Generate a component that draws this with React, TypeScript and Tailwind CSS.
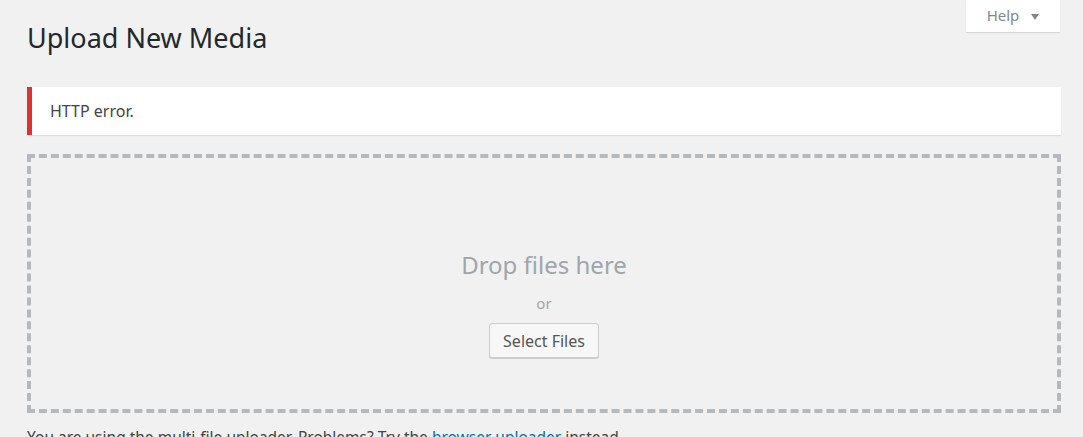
export default function App() {
  return (
    <div
      className="w-[1083px] h-[437px] overflow-hidden bg-[#f1f1f1] text-[#444]"
      style={{ fontFamily: '"Noto Sans", "Open Sans", sans-serif' }}
    >
      <div className="flex justify-end pr-[23px]">
        <button className="flex h-[32px] w-[94px] items-center justify-center gap-[12px] bg-white text-[15px] text-[#82878c] shadow-[0_1px_1px_rgba(0,0,0,0.1)]">
          <span className="-mt-[1px]">Help</span>
          <svg width="8" height="6" viewBox="0 0 8 6" className="mt-[1px]">
            <path d="M0 0h8L4 6z" fill="#82878c" />
          </svg>
        </button>
      </div>

      <div className="pl-[27px] pr-[22px]">
        <h1 className="-mt-[11px] text-[27px] font-normal leading-[34px] text-[#23282d]">
          Upload New Media
        </h1>

        <div className="mt-[32px] flex h-[48px] items-center border-l-[5px] border-[#dc3232] bg-white pl-[18px] text-[16px] text-[#444] shadow-[0_1px_1px_rgba(0,0,0,0.08)]">
          HTTP error.
        </div>

        <div className="mt-[19px] flex h-[259px] flex-col items-center border-4 border-dashed border-[#b4b9be] pt-[91px]">
          <p className="text-[24px] leading-[32px] text-[#a0a5aa]">Drop files here</p>
          <p className="mt-[12px] text-[15px] leading-[20px] text-[#a0a5aa]">or</p>
          <button className="mt-[10px] h-[35px] rounded-[3px] border border-[#ccc] bg-[#f7f7f7] px-[13px] text-[16px] text-[#555] shadow-[0_1px_0_#ccc]">
            Select Files
          </button>
        </div>

        <p className="mt-[12px] text-[15.5px] leading-[24px] text-[#444]">
          You are using the multi-file uploader. Problems? Try the{" "}
          <a className="text-[#0073aa]">browser uploader</a> instead.
        </p>
      </div>
    </div>
  );
}
